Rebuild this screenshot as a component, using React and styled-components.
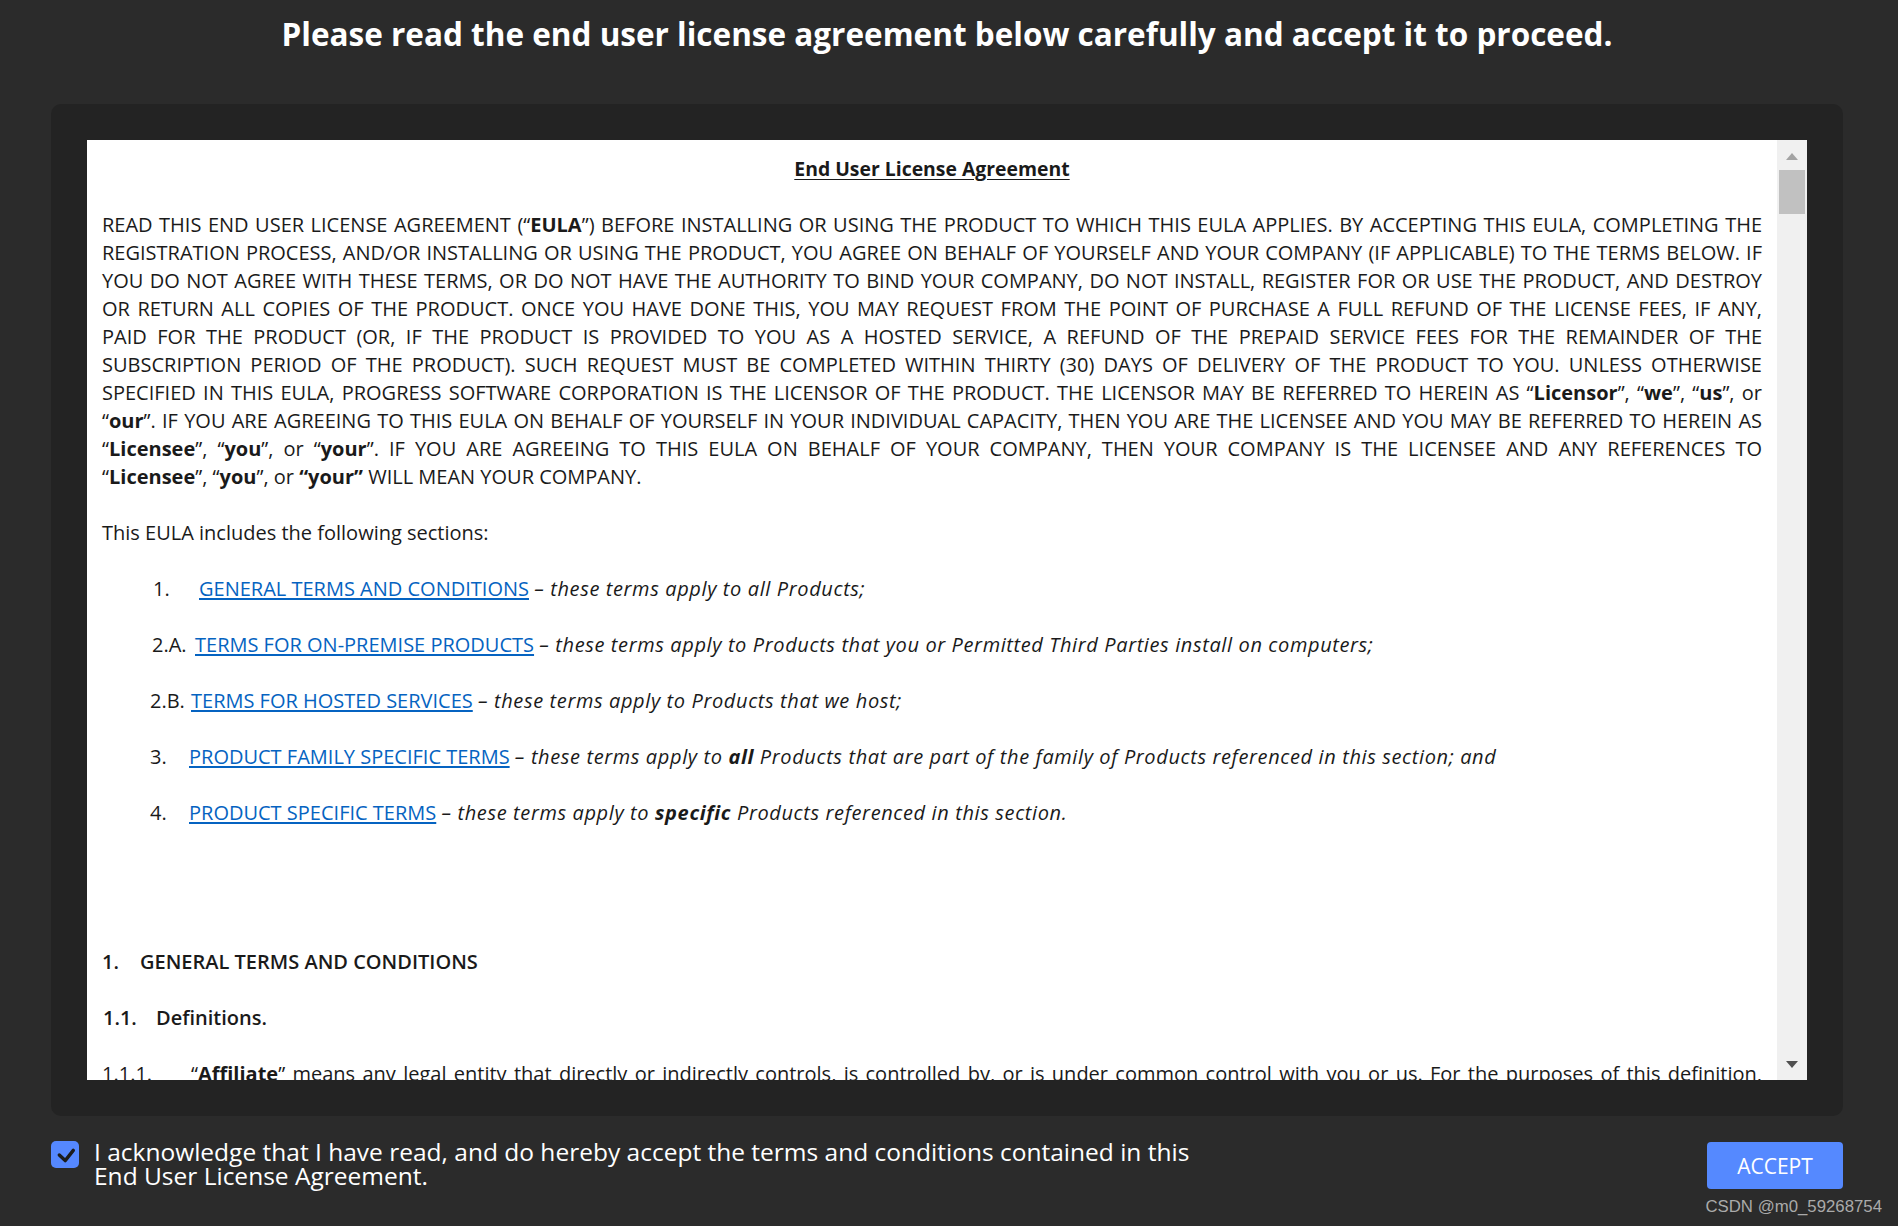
import styled, { createGlobalStyle } from "styled-components";

const GlobalStyle = createGlobalStyle`
  html, body {
    margin: 0;
    padding: 0;
    background: #2b2b2b;
  }
  body {
    font-family: "Open Sans", "Noto Sans", sans-serif;
  }
`;

const paragraph = [
  <>READ THIS END USER LICENSE AGREEMENT (“<b>EULA</b>”) BEFORE INSTALLING OR USING THE PRODUCT TO WHICH THIS EULA APPLIES. BY ACCEPTING THIS EULA, COMPLETING THE</>,
  <>REGISTRATION PROCESS, AND/OR INSTALLING OR USING THE PRODUCT, YOU AGREE ON BEHALF OF YOURSELF AND YOUR COMPANY (IF APPLICABLE) TO THE TERMS BELOW. IF</>,
  <>YOU DO NOT AGREE WITH THESE TERMS, OR DO NOT HAVE THE AUTHORITY TO BIND YOUR COMPANY, DO NOT INSTALL, REGISTER FOR OR USE THE PRODUCT, AND DESTROY</>,
  <>OR RETURN ALL COPIES OF THE PRODUCT. ONCE YOU HAVE DONE THIS, YOU MAY REQUEST FROM THE POINT OF PURCHASE A FULL REFUND OF THE LICENSE FEES, IF ANY,</>,
  <>PAID FOR THE PRODUCT (OR, IF THE PRODUCT IS PROVIDED TO YOU AS A HOSTED SERVICE, A REFUND OF THE PREPAID SERVICE FEES FOR THE REMAINDER OF THE</>,
  <>SUBSCRIPTION PERIOD OF THE PRODUCT). SUCH REQUEST MUST BE COMPLETED WITHIN THIRTY (30) DAYS OF DELIVERY OF THE PRODUCT TO YOU. UNLESS OTHERWISE</>,
  <>SPECIFIED IN THIS EULA, PROGRESS SOFTWARE CORPORATION IS THE LICENSOR OF THE PRODUCT. THE LICENSOR MAY BE REFERRED TO HEREIN AS “<b>Licensor</b>”, “<b>we</b>”, “<b>us</b>”, or</>,
  <>“<b>our</b>”. IF YOU ARE AGREEING TO THIS EULA ON BEHALF OF YOURSELF IN YOUR INDIVIDUAL CAPACITY, THEN YOU ARE THE LICENSEE AND YOU MAY BE REFERRED TO HEREIN AS</>,
  <>“<b>Licensee</b>”, “<b>you</b>”, or “<b>your</b>”. IF YOU ARE AGREEING TO THIS EULA ON BEHALF OF YOUR COMPANY, THEN YOUR COMPANY IS THE LICENSEE AND ANY REFERENCES TO</>,
  <>“<b>Licensee</b>”, “<b>you</b>”, or <b>“your”</b> WILL MEAN YOUR COMPANY.</>,
];

const sections = [
  { num: "1.", indent: 51, width: 46, link: "GENERAL TERMS AND CONDITIONS", rest: <>these terms apply to all Products;</> },
  { num: "2.A.", indent: 50, width: 43, link: "TERMS FOR ON-PREMISE PRODUCTS", rest: <>these terms apply to Products that you or Permitted Third Parties install on computers;</> },
  { num: "2.B.", indent: 48, width: 41, link: "TERMS FOR HOSTED SERVICES", rest: <>these terms apply to Products that we host;</> },
  { num: "3.", indent: 48, width: 39, link: "PRODUCT FAMILY SPECIFIC TERMS", rest: <>these terms apply to <b>all</b> Products that are part of the family of Products referenced in this section; and</> },
  { num: "4.", indent: 48, width: 39, link: "PRODUCT SPECIFIC TERMS", rest: <>these terms apply to <b>specific</b> Products referenced in this section.</> },
];

function App() {
  return (
    <Page>
      <GlobalStyle />
      <Heading>Please read the end user license agreement below carefully and accept it to proceed.</Heading>
      <Panel>
        <Viewer>
          <Doc>
            <DocTitle>End User License Agreement</DocTitle>
            <Para>
              {paragraph.map((line, i) => (
                <Line key={i} $last={i === paragraph.length - 1}>
                  {line}
                </Line>
              ))}
            </Para>
            <Block>This EULA includes the following sections:</Block>
            {sections.map((s) => (
              <Item key={s.num} $indent={s.indent}>
                <Num $width={s.width}>{s.num}</Num>
                <Link href="#">{s.link}</Link> <em>– {s.rest}</em>
              </Item>
            ))}
            <SectionHead $gap={121}>
              <Num $width={38}>1.</Num>
              <span>GENERAL TERMS AND CONDITIONS</span>
            </SectionHead>
            <SectionHead $gap={28} $indent={1}>
              <Num $width={53}>1.1.</Num>
              <span>Definitions.</span>
            </SectionHead>
            <Block>
              <Line>
                <Num $width={89}>1.1.1.</Num>“<b>Affiliate</b>” means any legal entity that directly or indirectly controls, is controlled by, or is under common control with you or us. For the purposes of this definition,
              </Line>
            </Block>
          </Doc>
          <ScrollTrack>
            <ScrollButton>
              <Arrow $dir="up" />
            </ScrollButton>
            <Thumb />
            <ScrollButton>
              <Arrow $dir="down" />
            </ScrollButton>
          </ScrollTrack>
        </Viewer>
      </Panel>
      <Footer>
        <Ack>
          <Check>
            <svg width="28" height="28" viewBox="0 0 28 28">
              <polyline points="8.3,14 14.2,19.6 22.3,9.4" fill="none" stroke="#1c1c1c" strokeWidth="3.4" strokeLinecap="round" strokeLinejoin="round" />
            </svg>
          </Check>
          <AckText>
            I acknowledge that I have read, and do hereby accept the terms and conditions contained in this
            <br />
            End User License Agreement.
          </AckText>
        </Ack>
        <AcceptButton>ACCEPT</AcceptButton>
      </Footer>
      <Watermark>CSDN @m0_59268754</Watermark>
    </Page>
  );
}

export default App;

const Page = styled.div`
  position: relative;
  width: 1898px;
  height: 1226px;
  box-sizing: border-box;
  padding: 0 55px 0 51px;
  display: flex;
  flex-direction: column;
  overflow: hidden;
`;
const Heading = styled.h1`
  margin: 0;
  height: 104px;
  box-sizing: border-box;
  padding-top: 11px;
  text-align: center;
  color: #ffffff;
  font-size: 31.5px;
  font-weight: 700;
  line-height: 46px;
  white-space: nowrap;
`;
const Panel = styled.section`
  height: 1012px;
  box-sizing: border-box;
  padding: 36px;
  background: #232323;
  border-radius: 10px;
  display: flex;
`;
const Viewer = styled.div`
  flex: 1;
  display: flex;
  background: #ffffff;
  overflow: hidden;
`;
const Doc = styled.div`
  flex: 1;
  overflow: hidden;
  padding: 15px 15px 0 15px;
  font-family: "Open Sans", "Noto Sans", sans-serif;
  font-size: 20px;
  line-height: 28px;
  color: #1a1a1a;
  b {
    font-weight: 700;
  }
`;
const DocTitle = styled.div`
  text-align: center;
  font-size: 19.4px;
  font-weight: 700;
  text-decoration: underline;
  text-underline-offset: 3px;
`;
const Para = styled.div`
  margin-top: 28px;
`;
const Line = styled.div`
  text-align: justify;
  text-align-last: ${(p) => (p.$last ? "left" : "justify")};
`;
const Block = styled.div`
  margin-top: 28px;
`;
const Item = styled.div`
  margin-top: 28px;
  padding-left: ${(p) => p.$indent}px;
  white-space: nowrap;
  em {
    font-style: italic;
    letter-spacing: 0.62px;
  }
`;
const Num = styled.span`
  display: inline-block;
  flex-shrink: 0;
  min-width: ${(p) => p.$width}px;
`;
const Link = styled.a`
  color: #0563c1;
  text-decoration: underline;
  text-underline-offset: 2px;
`;
const SectionHead = styled.div`
  display: flex;
  margin-top: ${(p) => p.$gap}px;
  padding-left: ${(p) => p.$indent || 0}px;
  font-weight: 600;
`;
const ScrollTrack = styled.div`
  width: 30px;
  flex-shrink: 0;
  background: #f0f0f0;
  display: flex;
  flex-direction: column;
`;
const ScrollButton = styled.div`
  height: 30px;
  display: flex;
  align-items: center;
  justify-content: center;
  &:last-child {
    margin-top: auto;
  }
`;
const Arrow = styled.span`
  width: 0;
  height: 0;
  border-left: 6.5px solid transparent;
  border-right: 6.5px solid transparent;
  ${(p) =>
    p.$dir === "up"
      ? "border-bottom: 7px solid #a3a3a3; margin-top: 3px;"
      : "border-top: 7px solid #505050; margin-bottom: 2px;"}
`;
const Thumb = styled.div`
  height: 44px;
  margin: 0 2px;
  background: #c1c1c1;
`;
const Footer = styled.footer`
  display: flex;
  justify-content: space-between;
  align-items: flex-start;
  padding-top: 24px;
`;
const Ack = styled.label`
  display: flex;
  align-items: flex-start;
  gap: 15px;
`;
const Check = styled.span`
  width: 28px;
  height: 27px;
  margin-top: 1px;
  flex-shrink: 0;
  border-radius: 5px;
  background: #5588ff;
  display: flex;
  align-items: center;
  justify-content: center;
  overflow: hidden;
`;
const AckText = styled.span`
  color: #ffffff;
  font-size: 24.5px;
  line-height: 24px;
`;
const AcceptButton = styled.button`
  margin-top: 2px;
  width: 136px;
  height: 47px;
  border: none;
  border-radius: 4px;
  background: #5589ff;
  color: #ffffff;
  font-family: "Open Sans", "Noto Sans", sans-serif;
  font-size: 21px;
  cursor: pointer;
`;
const Watermark = styled.div`
  position: absolute;
  right: 16px;
  bottom: 9px;
  font-family: "Liberation Sans", Arial, sans-serif;
  font-size: 16.8px;
  line-height: 20px;
  color: #aaaaaa;
`;
